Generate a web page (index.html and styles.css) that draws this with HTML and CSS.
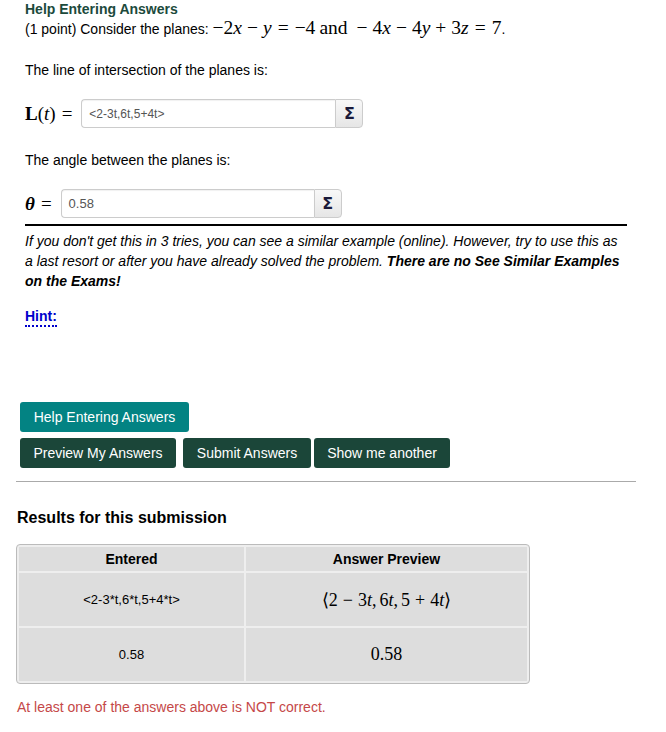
FILE: index.html
```html
<!DOCTYPE html>
<html>
<head>
<meta charset="utf-8">
<link rel="stylesheet" href="styles.css">
</head>
<body>
<div class="problem">
  <div class="title">Help Entering Answers</div>
  <div class="statement">(1 point) Consider the planes: <span class="math">−2<i>x</i><span class="bin">−</span><i>y</i><span class="rel">=</span>−4<span class="word">and</span><span class="bin">−</span>4<i>x</i><span class="bin">−</span>4<i>y</i><span class="bin">+</span>3<i>z</i><span class="rel">=</span>7</span>.</div>
  <p class="para p1">The line of intersection of the planes is:</p>
  <div class="answer-row">
    <span class="math label"><b>L</b>(<i>t</i>)<span class="rel">=</span></span>
    <div class="field wide"><span class="val grey">&lt;2-3t,6t,5+4t&gt;</span></div>
    <div class="sigma">Σ</div>
  </div>
  <p class="para p2">The angle between the planes is:</p>
  <div class="answer-row">
    <span class="math label"><b><i>θ</i></b><span class="rel">=</span></span>
    <div class="field narrow"><span class="val">0.58</span></div>
    <div class="sigma">Σ</div>
  </div>
  <hr class="rule">
  <p class="note">If you don't get this in 3 tries, you can see a similar example (online). However, try to use this as a last resort or after you have already solved the problem. <b>There are no See Similar Examples on the Exams!</b></p>
  <div class="hint">Hint:</div>
</div>
<div class="buttons">
  <div class="btn teal">Help Entering Answers</div>
  <div class="btn-row">
    <div class="btn dark w1">Preview My Answers</div>
    <div class="btn dark w2">Submit Answers</div>
    <div class="btn dark w3">Show me another</div>
  </div>
</div>
<hr class="sep">
<h3 class="results">Results for this submission</h3>
<table class="res">
  <tr class="head"><th class="c1">Entered</th><th class="c2">Answer Preview</th></tr>
  <tr class="r"><td>&lt;2-3*t,6*t,5+4*t&gt;</td><td class="math">⟨2<span class="bin">−</span>3<i>t</i>,<span class="comma"></span>6<i>t</i>,<span class="comma"></span>5<span class="bin">+</span>4<i>t</i>⟩</td></tr>
  <tr class="r"><td>0.58</td><td class="math">0.58</td></tr>
</table>
<div class="wrong">At least one of the answers above is NOT correct.</div>
</body>
</html>
```
FILE: styles.css
```css
html, body { margin: 0; padding: 0; background: #fff; }
body {
  font-family: "Liberation Sans", Arial, sans-serif;
  font-size: 14px;
  color: #000;
}
.problem { padding: 0 39px 0 25px; }
.title {
  font-weight: bold;
  color: #1c4a3c;
  font-size: 14px;
  line-height: 18px;
}
.statement { line-height: 20px; margin-top: 0; white-space: nowrap; }
.statement .math { font-size: 19.5px; }
.math { font-family: "Liberation Serif", "Times New Roman", serif; font-size: 18px; }
.bin { margin: 0 5px; }
.rel { margin: 0 6px; }
.word { margin: 0 4px 0 4px; }
.comma { display: inline-block; width: 3px; }
.para { margin: 0; line-height: 20px; }
.p1 { margin-top: 21px; }
.p2 { margin-top: 22px; }
.answer-row {
  display: flex;
  align-items: center;
  height: 29px;
  margin-top: 19px;
}
.answer-row + .para { margin-top: 22px; }
.label { margin-right: 9px; white-space: nowrap; font-size: 19px; }
.label .rel { margin-right: 0; }
.label b { font-weight: bold; }
.field {
  border: 1px solid #ccc;
  border-right: none;
  border-radius: 4px 0 0 4px;
  display: flex;
  align-items: center;
  padding-left: 7px;
  box-sizing: border-box;
  height: 29px;
  box-shadow: inset 0 1px 1px rgba(0,0,0,0.06);
}
.field.wide { width: 254px; }
.field.narrow { width: 253px; }
.val { font-size: 13px; color: #555; }
.val.grey { font-size: 12px; color: #555; }
.sigma {
  width: 28px;
  height: 29px;
  box-sizing: border-box;
  border: 1px solid #ccc;
  border-radius: 0 4px 4px 0;
  background: linear-gradient(#f8f8f8, #e6e6e6);
  display: flex;
  align-items: center;
  justify-content: center;
  font-weight: bold;
  font-size: 16px;
  font-family: "DejaVu Sans", sans-serif;
  color: #1a1a3a;
}
.rule {
  border: 0;
  border-top: 2px solid #000;
  margin: 6px 0 0 0;
  height: 0;
}
.note {
  font-style: italic;
  line-height: 20px;
  margin: 5px 0 0 0;
}
.hint {
  margin-top: 17px;
  display: inline-block;
  color: #0000cc;
  font-weight: bold;
  line-height: 17px;
  border-bottom: 2px dotted #0000cc;
}
.buttons { padding-left: 20px; margin-top: 75px; }
.btn {
  display: inline-flex;
  align-items: center;
  justify-content: center;
  height: 30px;
  box-sizing: border-box;
  border-radius: 3px;
  color: #fff;
  font-size: 14px;
}
.teal { background: #038383; width: 169px; }
.btn-row { display: flex; margin-top: 6px; }
.dark { background: #1b4639; }
.w1 { width: 156px; }
.w2 { width: 128px; margin-left: 7px; }
.w3 { width: 136px; margin-left: 3px; }
.sep {
  border: 0;
  border-top: 1px solid #aaa;
  margin: 13px 30px 0 16px;
  height: 0;
}
.results {
  font-size: 16px;
  font-weight: bold;
  margin: 26px 0 0 17px;
  line-height: 20px;
}
.res {
  margin: 16px 0 0 16px;
  border-collapse: separate;
  border-spacing: 2px;
  background: #eee;
  border: 1px solid #bbb;
  border-radius: 4px;
  width: 514px;
}
.res th, .res td {
  background: #ddd;
  text-align: center;
  padding: 0;
}
.res th { height: 24px; font-size: 14px; }
.res .c1 { width: 225px; }
.res td { height: 53px; font-size: 13px; }
.res td.math { font-size: 18px; }
.wrong {
  color: #c54848;
  margin: 15px 0 0 17px;
  font-size: 14px;
}
```
